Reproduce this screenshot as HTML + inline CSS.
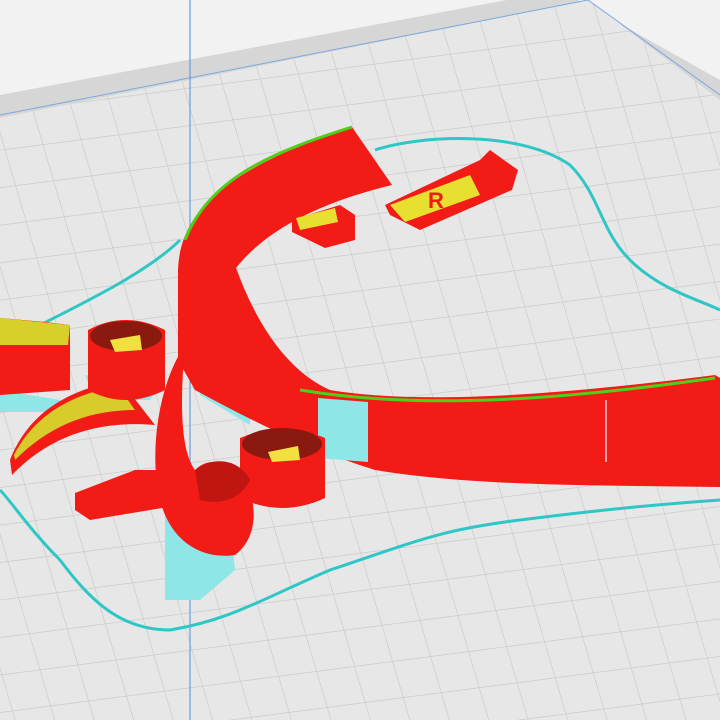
<!DOCTYPE html>
<html><head><meta charset="utf-8"><style>html,body{margin:0;padding:0;background:#efefef;overflow:hidden}svg{display:block}</style></head><body>
<svg width="720" height="720" viewBox="0 0 720 720" xmlns="http://www.w3.org/2000/svg">
<defs>
<pattern id="g" width="38" height="38" patternUnits="userSpaceOnUse" patternTransform="matrix(1,-0.13,0.28,0.95,0,0)">
<rect width="38" height="38" fill="#e7e7e7"/>
<path d="M0 0H38M0 0V38" stroke="#c6c6c6" stroke-width="1.2" fill="none"/>
</pattern>
</defs>
<rect width="720" height="720" fill="#f2f2f2"/>
<polygon points="0,95 560,-10 720,80 720,720 0,720" fill="#d6d6d6"/>
<polygon points="0,118 588,0 720,100 720,720 0,720" fill="url(#g)"/>
<polyline points="0,115 588,0 720,95" fill="none" stroke="#7aa8e0" stroke-width="1"/>
<line x1="190" y1="0" x2="190" y2="720" stroke="#6a9be0" stroke-width="1.2"/>
<path d="M40,325 C90,300 150,270 180,240 M375,150 C420,135 520,130 570,165 C600,195 600,230 630,260 C660,290 700,300 720,310 M720,500 C650,505 600,510 520,520 C440,530 420,540 330,570 C260,600 230,620 170,630 C120,630 90,600 60,560 C30,530 10,500 0,490" fill="none" stroke="#2fc6c6" stroke-width="3"/>
<polygon points="165,505 230,520 235,570 200,600 165,600" fill="#8fe6e6"/>
<polygon points="200,360 250,390 250,425 200,395" fill="#8fe6e6"/>
<polygon points="0,390 60,400 60,412 0,412" fill="#8fe6e6"/>
<polygon points="85,375 160,385 150,400 95,400" fill="#8fe6e6"/>
<path d="M352,127 L392,185 C330,200 270,225 236,268 C255,320 285,370 330,390 C420,405 560,395 715,375 L720,378 L720,487 C600,485 480,487 375,470 C310,450 250,420 195,390 L178,360 L178,270 C180,215 220,170 352,127 Z" fill="#f21b16"/>
<path d="M352,127 C280,150 210,175 185,240" fill="none" stroke="#4ed01a" stroke-width="3"/>
<path d="M300,390 C420,410 560,400 715,378" fill="none" stroke="#4ed01a" stroke-width="3"/>
<polygon points="318,398 368,402 368,462 318,458" fill="#8fe6e6"/>
<line x1="606" y1="400" x2="606" y2="462" stroke="#fff" stroke-width="1.2"/>
<polygon points="292,220 340,205 355,215 355,240 325,248 292,232" fill="#f21b16"/>
<polygon points="296,218 335,208 338,222 300,230" fill="#e8e030"/>
<polygon points="385,205 480,160 490,150 518,170 512,190 420,230 390,215" fill="#f21b16"/>
<polygon points="390,205 470,175 480,195 405,222" fill="#e8e030"/>
<text x="428" y="208" font-family="Liberation Sans, sans-serif" font-size="22" font-weight="bold" fill="#f21b16">R</text>
<polygon points="0,318 45,322 70,325 70,390 0,395" fill="#f21b16"/>
<polygon points="0,318 70,325 68,345 0,345" fill="#d8d02a"/>
<path d="M10,460 C30,410 70,390 120,380 L155,425 C100,420 50,435 12,475 Z" fill="#f21b16"/>
<path d="M14,455 C35,415 70,395 118,386 L135,410 C90,410 50,425 15,460 Z" fill="#d8cc2a"/>
<polygon points="75,493 135,470 175,470 180,505 90,520 75,510" fill="#f21b16"/>
<path d="M88,330 Q125,310 165,330 L165,390 Q125,410 88,390 Z" fill="#f21b16"/>
<ellipse cx="126" cy="336" rx="36" ry="15" fill="#8a1a10"/>
<polygon points="110,340 140,335 142,350 115,352" fill="#f0e040"/>
<path d="M240,438 Q282,420 325,438 L325,498 Q282,518 240,498 Z" fill="#f21b16"/>
<ellipse cx="282" cy="444" rx="40" ry="16" fill="#8a1a10"/>
<polygon points="268,452 298,446 300,460 272,462" fill="#f0e040"/>
<path d="M185,345 C155,390 150,460 160,500 C170,540 200,560 235,555 C255,540 260,510 245,480 C230,462 210,455 195,470 C180,450 180,400 185,345 Z" fill="#f21b16"/>
<path d="M195,470 C215,455 240,460 250,480 C240,500 220,505 200,500 Z" fill="#c01510"/>
</svg>
</body></html>
